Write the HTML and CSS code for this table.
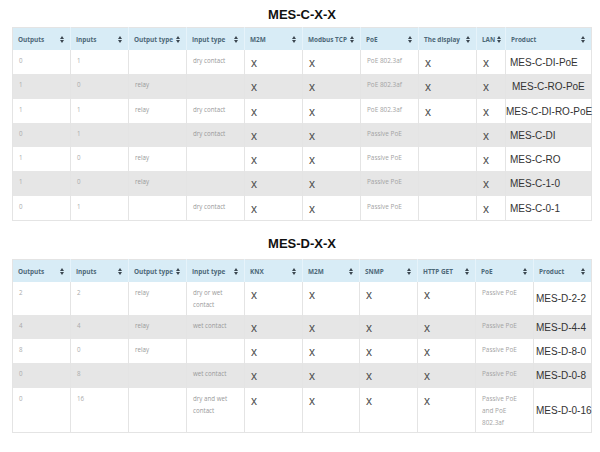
FILE: index.html
```html
<!DOCTYPE html>
<html>
<head>
<meta charset="utf-8">
<link rel="stylesheet" href="styles.css">
</head>
<body>
<div class="page">
  <section class="block first">
    <h2 class="title">MES-C-X-X</h2>
    <table class="grid">
      <colgroup>
        <col class="c58"><col class="c58"><col class="c58"><col class="c58"><col class="c58">
        <col class="c58"><col class="c58"><col class="c58"><col class="c29"><col>
      </colgroup>
      <thead>
        <tr>
          <th><div class="th">Outputs<i class="sort"></i></div></th>
          <th><div class="th">Inputs<i class="sort"></i></div></th>
          <th><div class="th">Output type<i class="sort"></i></div></th>
          <th><div class="th">Input type<i class="sort"></i></div></th>
          <th><div class="th">M2M<i class="sort"></i></div></th>
          <th><div class="th">Modbus TCP<i class="sort"></i></div></th>
          <th><div class="th">PoE<i class="sort"></i></div></th>
          <th><div class="th">The display<i class="sort"></i></div></th>
          <th class="narrow"><div class="th">LAN<i class="sort"></i></div></th>
          <th><div class="th">Product<i class="sort"></i></div></th>
        </tr>
      </thead>
      <tbody>
        <tr><td class="num">0</td><td class="num">1</td><td></td><td>dry contact</td><td class="x">x</td><td class="x">x</td><td class="poe">PoE 802.3af</td><td class="x">x</td><td class="x">x</td><td class="prod">MES-C-DI-PoE</td></tr>
        <tr><td class="num">1</td><td class="num">0</td><td>relay</td><td></td><td class="x">x</td><td class="x">x</td><td class="poe">PoE 802.3af</td><td class="x">x</td><td class="x">x</td><td class="prod wide">MES-C-RO-PoE</td></tr>
        <tr><td class="num">1</td><td class="num">1</td><td>relay</td><td>dry contact</td><td class="x">x</td><td class="x">x</td><td class="poe">PoE 802.3af</td><td class="x">x</td><td class="x">x</td><td class="prod tight">MES-C-DI-RO-PoE</td></tr>
        <tr><td class="num">0</td><td class="num">1</td><td></td><td>dry contact</td><td class="x">x</td><td class="x">x</td><td class="poe">Passive PoE</td><td></td><td class="x">x</td><td class="prod">MES-C-DI</td></tr>
        <tr><td class="num">1</td><td class="num">0</td><td>relay</td><td></td><td class="x">x</td><td class="x">x</td><td class="poe">Passive PoE</td><td></td><td class="x">x</td><td class="prod">MES-C-RO</td></tr>
        <tr><td class="num">1</td><td class="num">0</td><td>relay</td><td></td><td class="x">x</td><td class="x">x</td><td class="poe">Passive PoE</td><td></td><td class="x">x</td><td class="prod">MES-C-1-0</td></tr>
        <tr><td class="num">0</td><td class="num">1</td><td></td><td>dry contact</td><td class="x">x</td><td class="x">x</td><td class="poe">Passive PoE</td><td></td><td class="x">x</td><td class="prod">MES-C-0-1</td></tr>
      </tbody>
    </table>
  </section>

  <section class="block second">
    <h2 class="title">MES-D-X-X</h2>
    <table class="grid">
      <colgroup>
        <col class="c58"><col class="c58"><col class="c58"><col class="c58"><col class="c58">
        <col class="c57"><col class="c58"><col class="c58"><col class="c58"><col>
      </colgroup>
      <thead>
        <tr>
          <th><div class="th">Outputs<i class="sort"></i></div></th>
          <th><div class="th">Inputs<i class="sort"></i></div></th>
          <th><div class="th">Output type<i class="sort"></i></div></th>
          <th><div class="th">Input type<i class="sort"></i></div></th>
          <th><div class="th">KNX<i class="sort"></i></div></th>
          <th><div class="th">M2M<i class="sort"></i></div></th>
          <th><div class="th">SNMP<i class="sort"></i></div></th>
          <th><div class="th">HTTP GET<i class="sort"></i></div></th>
          <th><div class="th">PoE<i class="sort"></i></div></th>
          <th><div class="th">Product<i class="sort"></i></div></th>
        </tr>
      </thead>
      <tbody>
        <tr><td class="num">2</td><td class="num">2</td><td>relay</td><td>dry or wet contact</td><td class="x">x</td><td class="x">x</td><td class="x">x</td><td class="x">x</td><td class="poe">Passive PoE</td><td class="prod">MES-D-2-2</td></tr>
        <tr><td class="num">4</td><td class="num">4</td><td>relay</td><td>wet contact</td><td class="x">x</td><td class="x">x</td><td class="x">x</td><td class="x">x</td><td class="poe">Passive PoE</td><td class="prod">MES-D-4-4</td></tr>
        <tr><td class="num">8</td><td class="num">0</td><td>relay</td><td></td><td class="x">x</td><td class="x">x</td><td class="x">x</td><td class="x">x</td><td class="poe">Passive PoE</td><td class="prod">MES-D-8-0</td></tr>
        <tr><td class="num">0</td><td class="num">8</td><td></td><td>wet contact</td><td class="x">x</td><td class="x">x</td><td class="x">x</td><td class="x">x</td><td class="poe">Passive PoE</td><td class="prod">MES-D-0-8</td></tr>
        <tr><td class="num">0</td><td class="num">16</td><td></td><td>dry and wet contact</td><td class="x">x</td><td class="x">x</td><td class="x">x</td><td class="x">x</td><td class="poe">Passive PoE and PoE 802.3af</td><td class="prod">MES-D-0-16</td></tr>
      </tbody>
    </table>
  </section>
</div>
</body>
</html>
```

FILE: styles.css
```css
html, body {
  margin: 0;
  padding: 0;
  background: #ffffff;
}

.page {
  width: 580px;
  padding: 7px 0 0 12px;
  font-family: "Open Sans", "Liberation Sans", sans-serif;
}

.title {
  margin: 0 0 5px;
  font-family: "Liberation Sans", Arial, sans-serif;
  font-weight: bold;
  font-size: 13px;
  line-height: 15px;
  text-align: center;
  color: #111;
}

.second {
  margin-top: 15px;
}

.second .title {
  margin-bottom: 8px;
}

.grid {
  width: 580px;
  table-layout: fixed;
  border-collapse: collapse;
  border: 1px solid #e4e4e4;
}

.c58 { width: 58px; }
.c57 { width: 57px; }
.c29 { width: 29px; }

.grid th {
  background: #d8ecf6;
  padding: 5px 6px 4px 5px;
  border-right: 1px solid #e6f3fa;
  text-align: left;
  vertical-align: middle;
}

.grid th:last-child {
  border-right: none;
}

.grid th.narrow {
  padding-right: 4px;
}

.th {
  display: flex;
  align-items: center;
  justify-content: space-between;
  font-size: 6.4px;
  line-height: 13px;
  font-weight: bold;
  color: #4d6878;
  white-space: nowrap;
}

.sort {
  display: flex;
  flex-direction: column;
  gap: 1px;
  flex: none;
}

.sort::before,
.sort::after {
  content: "";
  display: block;
  width: 0;
  height: 0;
  border-left: 2px solid transparent;
  border-right: 2px solid transparent;
}

.sort::before {
  border-bottom: 3px solid #3b4650;
}

.sort::after {
  border-top: 3px solid #3b4650;
}

.grid td {
  padding: 5px 6px 3px 6px;
  border-right: 1px solid #e4e4e4;
  vertical-align: top;
  font-size: 6.2px;
  line-height: 12.3px;
  color: #999;
}

.grid td:last-child {
  border-right: none;
}

.grid tbody tr:nth-child(even) td {
  background: #e6e6e6;
}

.grid td.num {
  color: #aaa;
}

.grid td.poe {
  font-size: 6.4px;
  color: #a3a3a3;
}

.grid td.x {
  font-family: "Liberation Sans", Arial, sans-serif;
  font-size: 12px;
  line-height: 16.3px;
  color: #505050;
}

.grid td.prod {
  font-family: "Liberation Sans", Arial, sans-serif;
  font-size: 10px;
  line-height: 16.3px;
  color: #333;
  vertical-align: middle;
  padding-left: 4px;
  padding-right: 0;
  white-space: nowrap;
}

.second .grid td.prod {
  padding-left: 2px;
}

.grid td.prod.wide {
  padding-left: 6px;
}

.grid td.prod.tight {
  padding-left: 0;
}
```
